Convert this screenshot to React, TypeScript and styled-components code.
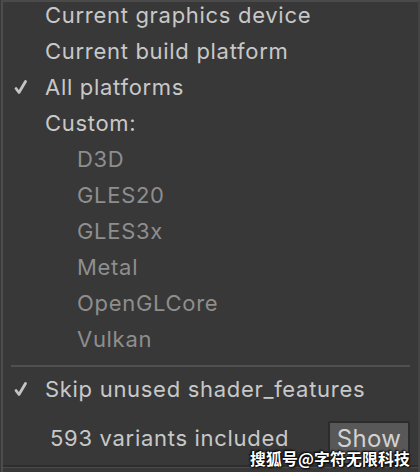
import React, { FC } from 'react'
import styled, { createGlobalStyle } from 'styled-components'

const GlobalStyle = createGlobalStyle`
  html, body {
    margin: 0;
    padding: 0;
    background: #383838;
  }
  body {
    width: 420px;
    height: 472px;
    overflow: hidden;
    font-family: Inter, "Noto Sans", sans-serif;
  }
`

const Panel = styled.div`
  position: relative;
  box-sizing: border-box;
  display: flex;
  flex-direction: column;
  width: 419px;
  height: 472px;
  margin-left: 1px;
  background: #383838;
  border-left: 2px solid #4d4d4d;
  border-top: 2px solid #4a4a4a;
  border-right: 2px solid #444;
  overflow: hidden;
`

const List = styled.div`
  display: flex;
  flex-direction: column;
  margin-top: -5px;
`

const Row = styled.div<{ indent?: boolean; dim?: boolean }>`
  display: grid;
  grid-template-columns: 32px auto;
  align-items: center;
  height: 36px;
  padding-left: ${p => (p.indent ? 42 : 10)}px;
  font-size: 22px;
  letter-spacing: 0.7px;
  color: ${p => (p.dim ? '#8e8e8e' : '#c8c8c8')};
  white-space: nowrap;
`

const CheckSlot = styled.span`
  display: flex;
  align-items: center;
  height: 18px;
`

const Separator = styled.div`
  height: 2px;
  background: #505050;
  margin: 8px 8px 4px 8px;
`

const Footer = styled.div`
  display: flex;
  align-items: flex-start;
  justify-content: space-between;
  padding: 14px 8px 0 47px;
  font-size: 22px;
  letter-spacing: 0.7px;
  color: #c8c8c8;
`

const Count = styled.span`
  line-height: 34px;
  white-space: nowrap;
`

const Button = styled.div`
  box-sizing: border-box;
  width: 82px;
  height: 44px;
  background: #585858;
  border: 2px solid #2c2c2c;
  border-radius: 2px;
  color: #d2d2d2;
  font-size: 24px;
  letter-spacing: 0.3px;
  display: flex;
  align-items: center;
  justify-content: center;
  padding-bottom: 10px;
`

const BottomLine = styled.div`
  height: 2px;
  margin-top: auto;
  margin-bottom: 4px;
  background: #2e2e2e;
  border-bottom: 1px solid #4a4a4a;
`

const Watermark = styled.div`
  position: absolute;
  left: 247px;
  top: 445px;
  font-family: "Noto Sans CJK SC", sans-serif;
  font-weight: 700;
  font-size: 15.8px;
  color: #ffffff;
  letter-spacing: 0.2px;
  text-shadow: 0 0 2px #000, 1px 1px 2px #000, -1px -1px 2px #000;
`

const CheckMark: FC = () => (
  <svg width="16" height="18" viewBox="0 0 16 18">
    <path d="M3 10.5 L6 14.5 L12.5 3.5" fill="none" stroke="#c4c4c4" strokeWidth="2.8" strokeLinecap="round" strokeLinejoin="round" />
  </svg>
)

const items = [
  { label: 'Current graphics device' },
  { label: 'Current build platform' },
  { label: 'All platforms', checked: true },
  { label: 'Custom:' },
  { label: 'D3D', sub: true },
  { label: 'GLES20', sub: true },
  { label: 'GLES3x', sub: true },
  { label: 'Metal', sub: true },
  { label: 'OpenGLCore', sub: true },
  { label: 'Vulkan', sub: true },
]

const App: FC = () => (
  <>
    <GlobalStyle />
    <Panel>
      <List>
        {items.map(item => (
          <Row key={item.label} indent={item.sub} dim={item.sub}>
            <CheckSlot>{item.checked && <CheckMark />}</CheckSlot>
            <span>{item.label}</span>
          </Row>
        ))}
      </List>
      <Separator />
      <Row>
        <CheckSlot><CheckMark /></CheckSlot>
        <span>Skip unused shader_features</span>
      </Row>
      <Footer>
        <Count>593 variants included</Count>
        <Button>Show</Button>
      </Footer>
      <BottomLine />
      <Watermark>搜狐号@字符无限科技</Watermark>
    </Panel>
  </>
)

export default App
